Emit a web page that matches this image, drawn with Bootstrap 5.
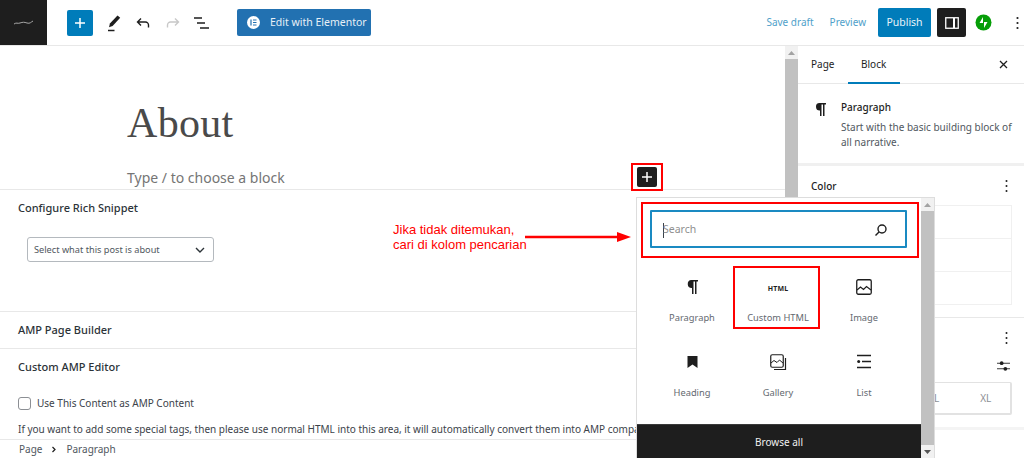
<!DOCTYPE html>
<html lang="en">
<head>
<meta charset="UTF-8">
<meta name="viewport" content="width=device-width, initial-scale=1.0">
<title>About - Edit Page</title>
<link href="https://cdn.jsdelivr.net/npm/bootstrap@5.3.0/dist/css/bootstrap.min.css" rel="stylesheet">
<style>
html, body { height: 458px; overflow: hidden; }
body { font-family: "Noto Sans", "Open Sans", sans-serif; font-size: 10px; color: #1e1e1e; background: #fff; }
.shell { position: relative; width: 1024px; height: 458px; overflow: hidden; }
.topbar { height: 46px; border-bottom: 1px solid #e8e8e8; }
.logo-box { width: 47px; height: 45px; background: #1e1e1e; }
.add-btn { width: 26px; height: 26px; margin-left: 20px; background: #007cba; border-radius: 2px; }
.tool-ico { margin-left: 14px; width: 16px; }
.tool-gap { margin-left: 13px; }
.elementor-btn { margin-left: 27px; width: 134px; height: 27px; background: #2271b1; color: #e8f0f6; border-radius: 2px; font-size: 10.500px; gap: 10px; padding-left: 10px; white-space: nowrap; }
.elementor-dot { width: 13px; height: 13px; border-radius: 50%; background: #fff; }
.top-link { color: #4f9fca; font-size: 10px; }
.publish-btn { width: 53px; height: 29px; background: #007cba; color: #e8f3f9; border-radius: 2px; font-size: 10.500px; }
.toggle-btn { width: 29px; height: 29px; background: #1e1e1e; border-radius: 2px; }
.editor-pane { width: 785px; }
.title-block { height: 144px; padding: 48px 0 0 127px; border-bottom: 1px solid #e8e8e8; }
.post-title { font-family: "Liberation Serif", serif; font-size: 42px; line-height: 58px; font-weight: 400; color: #4a4a4a; margin: 0; letter-spacing: .3px; }
.block-hint { margin-top: 16px; font-size: 14px; line-height: 20px; color: #757575; }
.meta-head { font-size: 11px; font-weight: 500; color: #2c3338; }
.rich-panel { height: 122px; padding: 10px 18px 0; border-bottom: 1px solid #e8e8e8; }
.fake-select { width: 187px; height: 25px; margin: 20px 0 0 9px; padding: 1px 8px 0 6px; border: 1px solid #b4b9be; border-radius: 3px; font-size: 9.200px; color: #50575e; }
.amp-builder { height: 37px; padding: 0 18px; border-bottom: 1px solid #e8e8e8; }
.amp-editor { height: 91px; padding: 10px 18px 0; font-size: 10px; color: #3c434a; }
.amp-check { width: 13px; height: 13px; border: 1px solid #8c8f94; border-radius: 3px; }
.amp-note { white-space: nowrap; margin-top: 11px; line-height: 14px; }
.crumbs { position: absolute; left: 0; right: 239px; bottom: 0; height: 19px; padding-left: 19px; background: #fff; border-top: 1px solid #e8e8e8; font-size: 10px; color: #50575e; gap: 9px; }
.main-scroll { width: 13px; background: #f1f1f1; }
.scroll-arrow { height: 13px; color: #a3a3a3; }
.scroll-thumb { background: #c1c1c1; }
.side-pane { width: 226px; }
.side-tabs { height: 38px; border-bottom: 1px solid #e8e8e8; padding-left: 13px; font-size: 10px; }
.side-tab { height: 38px; width: 37px; color: #1e1e1e; }
.side-tab-on { width: 52px; padding-left: 13px; box-shadow: inset 0 -2px 0 #007cba; margin-right: auto; }
.block-card { height: 82px; padding: 15px 8px 0 17px; border-bottom: 3px solid #f0f0f0; gap: 15px; }
.block-name { font-weight: 500; line-height: 16px; }
.block-desc { color: #50575e; line-height: 15px; margin-top: 5px; }
.side-section { padding: 0 12px 0 13px; }
.color-panel { height: 152px; border-bottom: 1px solid #e8e8e8; }
.color-head { height: 39px; }
.color-rows { height: 100px; border: 1px solid #f0f0f0; }
.color-row { height: 33px; border-bottom: 1px solid #f0f0f0; }
.type-panel { height: 112px; border-bottom: 3px solid #f4f4f4; }
.size-box { height: 33px; border: 2px solid #e2e2e2; border-top-width: 1px; border-left: 0; border-radius: 2px; color: #8c8f94; font-size: 10px; }
.inserter-pop { position: absolute; left: 636px; top: 197px; width: 299px; height: 261px; background: #fff; border: 1px solid #ddd; border-bottom: 0; }
.pop-body { width: 285px; }
.search-box { height: 38px; margin: 12px 14px 0 13px; padding: 2px 18px 0 11px; border: 2px solid #1a8ac2; border-radius: 1px; font-size: 10.500px; color: #8f8f8f; }
.caret-line { width: 1px; height: 15px; margin-right: -1px; background: #3c434a; }
.inserter-grid { display: grid; grid-template-columns: 86px 86px 86px; justify-content: start; grid-auto-rows: 75px; margin-top: 19px; padding-left: 12px; height: 157px; }
.inserter-item { font-size: 9.300px; color: #646970; gap: 12px; padding-top: 12px; }
.inserter-ico { height: 20px; }
.html-tag { font-size: 7px; font-weight: 700; line-height: 20px; color: #1e1e1e; letter-spacing: .2px; }
.browse-all { height: 34px; padding-top: 1px; background: #1e1e1e; color: #f0f0f0; font-size: 10px; border-top: 1px solid #3a3a3a; margin-top: auto; }
.pop-scroll { width: 13px; background: #f1f1f1; }
.red-mark { position: absolute; border: 2px solid #f00; }
.note-red { position: absolute; left: 393px; top: 222px; color: #f00; font-family: "Liberation Sans", sans-serif; font-size: 13px; line-height: 15px; }
.note-arrow { position: absolute; left: 525px; top: 231px; }
.plus-dark { position: absolute; left: 637px; top: 167px; width: 20px; height: 20px; background: #1e1e1e; border-radius: 2px; }
</style>
</head>
<body>
<div class="shell d-flex flex-column">

  <header class="topbar d-flex align-items-center flex-shrink-0">
    <div class="logo-box d-flex align-items-center justify-content-center">
      <svg width="22" height="6" viewBox="0 0 22 6"><path d="M1 4c3-2 3 0 6-1s4-1 7 0 4-1 6-2" fill="none" stroke="#a8a8a8" stroke-width="1"/></svg>
    </div>
    <div class="add-btn d-flex align-items-center justify-content-center">
      <svg width="14" height="14" viewBox="0 0 14 14"><path d="M7 2v10M2 7h10" stroke="#fff" stroke-width="1.500"/></svg>
    </div>
    <svg class="tool-ico" width="16" height="18" viewBox="0 0 16 18"><path d="M10.500 1.500l2.700 2.200-7.600 8.300-3.600 1.200.9-3.600z" fill="#1e1e1e"/><path d="M1 16.500h6.500" stroke="#1e1e1e" stroke-width="1.500"/></svg>
    <svg class="tool-gap" width="16" height="14" viewBox="0 0 16 14"><path d="M5 2.500L1.500 6 5 9.500M2 6h7.500a3 3 0 0 1 3 3v2.500" fill="none" stroke="#1e1e1e" stroke-width="1.400"/></svg>
    <svg class="tool-gap" width="16" height="14" viewBox="0 0 16 14"><path d="M10 2.500L13.500 6 10 9.500M13 6H5.500a3 3 0 0 0-3 3v2.500" fill="none" stroke="#c8c8c8" stroke-width="1.400"/></svg>
    <svg style="margin-left:12px" width="17" height="14" viewBox="0 0 17 14"><path d="M1 2h8M4 7h8M7 12h9" stroke="#1e1e1e" stroke-width="1.500"/></svg>
    <div class="elementor-btn d-flex align-items-center">
      <span class="elementor-dot d-flex align-items-center justify-content-center">
        <svg width="7" height="7" viewBox="0 0 7 7"><path d="M1 .5v6" stroke="#2271b1" stroke-width="1.200"/><path d="M3 1h3.500M3 3.500h3.500M3 6h3.500" stroke="#2271b1" stroke-width="1"/></svg>
      </span>
      <span>Edit with Elementor</span>
    </div>
    <div class="ms-auto d-flex align-items-center">
      <span class="top-link">Save draft</span>
      <span class="top-link ms-3">Preview</span>
      <span class="publish-btn d-flex align-items-center justify-content-center" style="margin-left:12px">Publish</span>
      <span class="toggle-btn d-flex align-items-center justify-content-center" style="margin-left:6px">
        <svg width="14" height="14" viewBox="0 0 14 14"><rect x=".75" y="1.750" width="12.500" height="10.500" fill="none" stroke="#fff" stroke-width="1.300"/><path d="M9 2v10" stroke="#fff" stroke-width="2"/></svg>
      </span>
      <svg style="margin-left:9px" width="17" height="17" viewBox="0 0 17 17"><circle cx="8.500" cy="8.500" r="8" fill="#069e08"/><path d="M8 3v6H4.500zM9 14V8h3.500z" fill="#fff"/></svg>
      <svg style="margin:0 5px 0 24px" width="3" height="14" viewBox="0 0 3 14"><circle cx="1.500" cy="2" r="1.100" fill="#1e1e1e"/><circle cx="1.500" cy="7" r="1.100" fill="#1e1e1e"/><circle cx="1.500" cy="12" r="1.100" fill="#1e1e1e"/></svg>
    </div>
  </header>

  <div class="d-flex flex-grow-1 overflow-hidden">
    <main class="editor-pane flex-shrink-0">
      <div class="title-block">
        <h1 class="post-title">About</h1>
        <div class="block-hint">Type / to choose a block</div>
      </div>
      <section class="rich-panel">
        <div class="meta-head">Configure Rich Snippet</div>
        <div class="fake-select d-flex align-items-center justify-content-between">
          <span>Select what this post is about</span>
          <svg width="10" height="6" viewBox="0 0 10 6"><path d="M1 1l4 4 4-4" fill="none" stroke="#2c3338" stroke-width="1.400"/></svg>
        </div>
      </section>
      <section class="amp-builder d-flex align-items-center"><span class="meta-head">AMP Page Builder</span></section>
      <section class="amp-editor">
        <div class="meta-head">Custom AMP Editor</div>
        <div class="d-flex align-items-center" style="margin-top:20px;gap:6px">
          <span class="amp-check"></span>
          <span>Use This Content as AMP Content</span>
        </div>
        <div class="amp-note">If you want to add some special tags, then please use normal HTML into this area, it will automatically convert them into AMP compatible tags.</div>
      </section>
    </main>

    <div class="main-scroll flex-shrink-0 d-flex flex-column">
      <div class="scroll-arrow d-flex align-items-center justify-content-center">
        <svg width="7" height="4" viewBox="0 0 7 4"><path d="M0 4l3.500-4L7 4z" fill="#a3a3a3"/></svg>
      </div>
      <div class="scroll-thumb flex-grow-1"></div>
    </div>

    <aside class="side-pane flex-shrink-0">
      <div class="side-tabs d-flex align-items-center">
        <span class="side-tab d-flex align-items-center">Page</span>
        <span class="side-tab side-tab-on d-flex align-items-center">Block</span>
        <svg class="me-3" width="9" height="9" viewBox="0 0 9 9"><path d="M1 1l7 7M8 1l-7 7" stroke="#1e1e1e" stroke-width="1.300"/></svg>
      </div>
      <div class="block-card d-flex">
        <svg class="flex-shrink-0 mt-1" width="11" height="13" viewBox="0 0 11 13"><path d="M4.500 0H11v1.500H9.500V13H8V1.500H6.500V13H5V7.500A3.750 3.750 0 0 1 4.500 0z" fill="#1e1e1e"/></svg>
        <div>
          <div class="block-name">Paragraph</div>
          <div class="block-desc">Start with the basic building block of all narrative.</div>
        </div>
      </div>
      <div class="side-section color-panel">
        <div class="color-head d-flex align-items-center justify-content-between">
          <span class="block-name">Color</span>
          <svg class="me-1" width="3" height="14" viewBox="0 0 3 14"><circle cx="1.500" cy="2" r="1" fill="#1e1e1e"/><circle cx="1.500" cy="7" r="1" fill="#1e1e1e"/><circle cx="1.500" cy="12" r="1" fill="#1e1e1e"/></svg>
        </div>
        <div class="color-rows">
          <div class="color-row"></div>
          <div class="color-row"></div>
        </div>
      </div>
      <div class="side-section type-panel">
        <div class="d-flex justify-content-end" style="padding-top:13px">
          <svg class="me-1" width="3" height="14" viewBox="0 0 3 14"><circle cx="1.500" cy="2" r="1" fill="#1e1e1e"/><circle cx="1.500" cy="7" r="1" fill="#1e1e1e"/><circle cx="1.500" cy="12" r="1" fill="#1e1e1e"/></svg>
        </div>
        <div class="d-flex justify-content-end" style="margin-top:15px">
          <svg style="margin-right:2px" width="13" height="12" viewBox="0 0 14 12"><path d="M0 3h14M0 9h14" stroke="#3c3c3c" stroke-width="1.200"/><circle cx="5" cy="3" r="2" fill="#1e1e1e"/><circle cx="9" cy="9" r="2" fill="#1e1e1e"/></svg>
        </div>
        <div class="size-box d-flex align-items-center" style="margin-top:10px">
          <span style="margin-left:123px">L</span>
          <span style="margin-left:41px">XL</span>
        </div>
      </div>
    </aside>
  </div>

  <div class="crumbs d-flex align-items-center">
    <span>Page</span>
    <svg width="6" height="7" viewBox="0 0 6 7"><path d="M1.500 1L4 3.500 1.500 6" fill="none" stroke="#1e1e1e" stroke-width="1.200"/></svg>
    <span>Paragraph</span>
  </div>

  <span class="plus-dark d-flex align-items-center justify-content-center">
    <svg width="12" height="12" viewBox="0 0 12 12"><path d="M6 1v10M1 6h10" stroke="#fff" stroke-width="1.500"/></svg>
  </span>

  <div class="inserter-pop d-flex">
    <div class="pop-body d-flex flex-column">
      <div class="search-box d-flex align-items-center">
        <span class="caret-line"></span>
        <span class="flex-grow-1">Search</span>
        <svg style="margin-right:-1px" width="14" height="14" viewBox="0 0 14 14"><circle cx="8" cy="6" r="4" fill="none" stroke="#1e1e1e" stroke-width="1.400"/><path d="M5 9l-3.500 3.500" stroke="#1e1e1e" stroke-width="1.400"/></svg>
      </div>
      <div class="inserter-grid">
        <div class="inserter-item d-flex flex-column align-items-center">
          <span class="inserter-ico"><svg width="11" height="14" viewBox="0 0 11 14"><path d="M4.500 0H11v1.500H9.500V14H8V1.500H6.500V14H5V8A4 4 0 0 1 4.500 0z" fill="#1e1e1e"/></svg></span>
          <span>Paragraph</span>
        </div>
        <div class="inserter-item d-flex flex-column align-items-center">
          <span class="inserter-ico html-tag">HTML</span>
          <span>Custom HTML</span>
        </div>
        <div class="inserter-item d-flex flex-column align-items-center">
          <span class="inserter-ico"><svg width="16" height="16" viewBox="0 0 16 16"><rect x=".75" y=".75" width="14.500" height="14.500" rx="1.500" fill="none" stroke="#1e1e1e" stroke-width="1.300"/><path d="M1 11l3.500-3 3 2.500 3-3 4.500 3.500" fill="none" stroke="#1e1e1e" stroke-width="1.200"/></svg></span>
          <span>Image</span>
        </div>
        <div class="inserter-item d-flex flex-column align-items-center">
          <span class="inserter-ico"><svg width="11" height="14" viewBox="0 0 11 14"><path d="M.5 1h10v12l-5-3.500-5 3.500z" fill="#1e1e1e"/></svg></span>
          <span>Heading</span>
        </div>
        <div class="inserter-item d-flex flex-column align-items-center">
          <span class="inserter-ico"><svg width="17" height="17" viewBox="0 0 17 17"><rect x=".75" y=".75" width="12.500" height="12.500" rx="1.500" fill="none" stroke="#1e1e1e" stroke-width="1.200"/><path d="M1 9l3-2.500 3 2 2.500-2.500 3.500 3" fill="none" stroke="#1e1e1e" stroke-width="1"/><path d="M15.500 4v11.500H4" fill="none" stroke="#1e1e1e" stroke-width="1.200"/></svg></span>
          <span>Gallery</span>
        </div>
        <div class="inserter-item d-flex flex-column align-items-center">
          <span class="inserter-ico"><svg width="14" height="15" viewBox="0 0 14 15"><path d="M0 1.500h14M5 7.500h9M0 13.500h14" stroke="#1e1e1e" stroke-width="1.300"/><circle cx="1.700" cy="7.500" r="1.500" fill="#1e1e1e"/></svg></span>
          <span>List</span>
        </div>
      </div>
      <div class="browse-all d-flex align-items-center justify-content-center">Browse all</div>
    </div>
    <div class="pop-scroll d-flex flex-column">
      <div class="scroll-arrow d-flex align-items-center justify-content-center">
        <svg width="7" height="4" viewBox="0 0 7 4"><path d="M0 4l3.500-4L7 4z" fill="#a3a3a3"/></svg>
      </div>
      <div class="scroll-thumb flex-grow-1"></div>
      <div class="scroll-arrow d-flex align-items-center justify-content-center">
        <svg width="7" height="4" viewBox="0 0 7 4"><path d="M0 0l3.500 4L7 0z" fill="#555"/></svg>
      </div>
    </div>
  </div>

  <span class="red-mark" style="left:631px;top:163px;width:32px;height:28px"></span>
  <span class="red-mark" style="left:641px;top:202px;width:278px;height:56px"></span>
  <span class="red-mark" style="left:733px;top:266px;width:87px;height:63px"></span>

  <div class="note-red">Jika tidak ditemukan,<br>cari di kolom pencarian</div>
  <svg class="note-arrow" width="107" height="12" viewBox="0 0 107 12"><path d="M0 6h96" stroke="#f00" stroke-width="2.500"/><path d="M92 1l14 5-14 5z" fill="#f00"/></svg>
</div>
<script src="https://cdn.jsdelivr.net/npm/bootstrap@5.3.0/dist/js/bootstrap.bundle.min.js"></script>
</body>
</html>
